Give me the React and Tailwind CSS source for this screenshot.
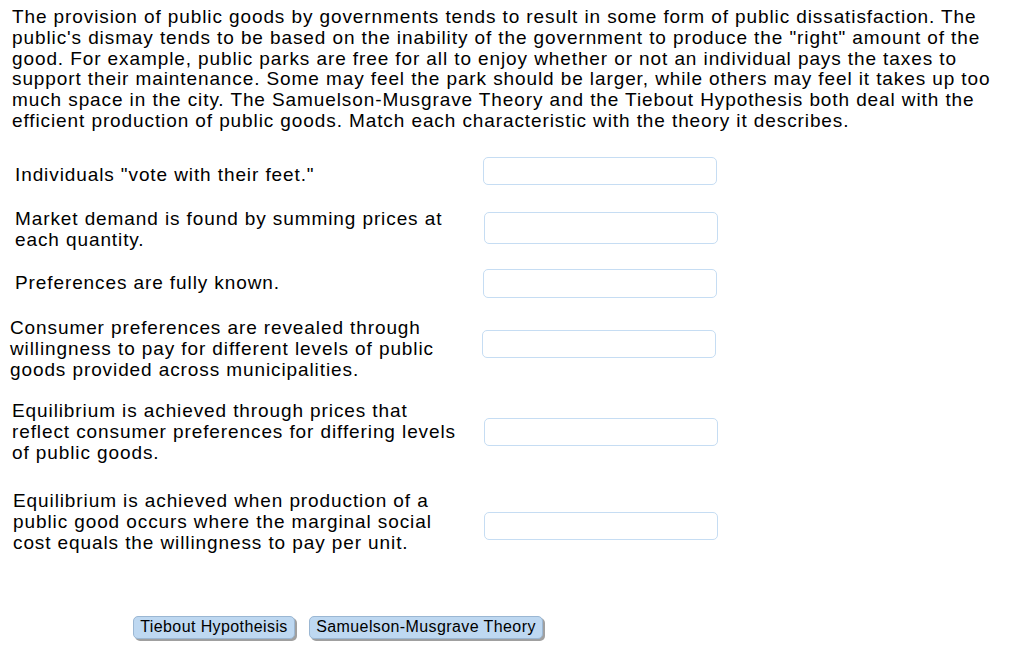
import React from "react";

const F = { fontFamily: '"Liberation Sans", Arial, sans-serif' };

function Row({ mt, labelPt, boxMt, labelPl, boxMl, boxH, lines }) {
  return (
    <div className={`flex items-start ${mt}`}>
      <div className={`w-[470px] shrink-0 ${labelPl} ${labelPt} text-[19px] leading-[21px] tracking-[0.9px] text-black whitespace-nowrap`}>
        {lines.map((l, i) => (
          <div key={i}>{l}</div>
        ))}
      </div>
      <div className={`${boxMl} ${boxMt} ${boxH} w-[234px] rounded-[5px] border border-[#c6ddf3] bg-white`} />
    </div>
  );
}

const para = [
  "The provision of public goods by governments tends to result in some form of public dissatisfaction. The",
  "public's dismay tends to be based on the inability of the government to produce the \"right\" amount of the",
  "good. For example, public parks are free for all to enjoy whether or not an individual pays the taxes to",
  "support their maintenance. Some may feel the park should be larger, while others may feel it takes up too",
  "much space in the city. The Samuelson-Musgrave Theory and the Tiebout Hypothesis both deal with the",
  "efficient production of public goods. Match each characteristic with the theory it describes.",
];

export default function App() {
  return (
    <div className="w-[1024px] h-[671px] bg-white text-black overflow-hidden" style={F}>
      <div className="pl-[12px] pt-[7px] text-[19px] leading-[20.8px] tracking-[0.9px] whitespace-nowrap">
        {para.map((l, i) => (
          <div key={i}>{l}</div>
        ))}
      </div>

      <div className="flex flex-col">
        <Row
          mt="mt-[25px]"
          labelPl="pl-[15px]"
          labelPt="pt-[7px]"
          boxMl="ml-[13px]"
          boxMt="mt-0"
          boxH="h-[28px]"
          lines={['Individuals "vote with their feet."']}
        />
        <Row
          mt="mt-[23px]"
          labelPl="pl-[15px]"
          labelPt="pt-0"
          boxMl="ml-[14px]"
          boxMt="mt-[4px]"
          boxH="h-[32px]"
          lines={["Market demand is found by summing prices at", "each quantity."]}
        />
        <Row
          mt="mt-[19px]"
          labelPl="pl-[15px]"
          labelPt="pt-[3px]"
          boxMl="ml-[13px]"
          boxMt="mt-0"
          boxH="h-[29px]"
          lines={["Preferences are fully known."]}
        />
        <Row
          mt="mt-[19px]"
          labelPl="pl-[10px]"
          labelPt="pt-0"
          boxMl="ml-[12px]"
          boxMt="mt-[13px]"
          boxH="h-[28px]"
          lines={[
            "Consumer preferences are revealed through",
            "willingness to pay for different levels of public",
            "goods provided across municipalities.",
          ]}
        />
        <Row
          mt="mt-[20px]"
          labelPl="pl-[12px]"
          labelPt="pt-0"
          boxMl="ml-[14px]"
          boxMt="mt-[18px]"
          boxH="h-[28px]"
          lines={[
            "Equilibrium is achieved through prices that",
            "reflect consumer preferences for differing levels",
            "of public goods.",
          ]}
        />
        <Row
          mt="mt-[27px]"
          labelPl="pl-[13px]"
          labelPt="pt-0"
          boxMl="ml-[14px]"
          boxMt="mt-[22px]"
          boxH="h-[28px]"
          lines={[
            "Equilibrium is achieved when production of a",
            "public good occurs where the marginal social",
            "cost equals the willingness to pay per unit.",
          ]}
        />
      </div>

      <div className="flex gap-[14px] pl-[133px] mt-[63px]">
        <div className="h-[23px] w-[162px] flex items-center justify-center rounded-[5px] border border-[#9bb7d3] bg-[#bed8f1] text-[16px] tracking-[0.4px] leading-none shadow-[2px_2px_0_#a0a0a0]">
          Tiebout Hypotheisis
        </div>
        <div className="h-[23px] w-[234px] flex items-center justify-center rounded-[5px] border border-[#9bb7d3] bg-[#bed8f1] text-[16px] tracking-[0.4px] leading-none shadow-[2px_2px_0_#a0a0a0]">
          Samuelson-Musgrave Theory
        </div>
      </div>
    </div>
  );
}
